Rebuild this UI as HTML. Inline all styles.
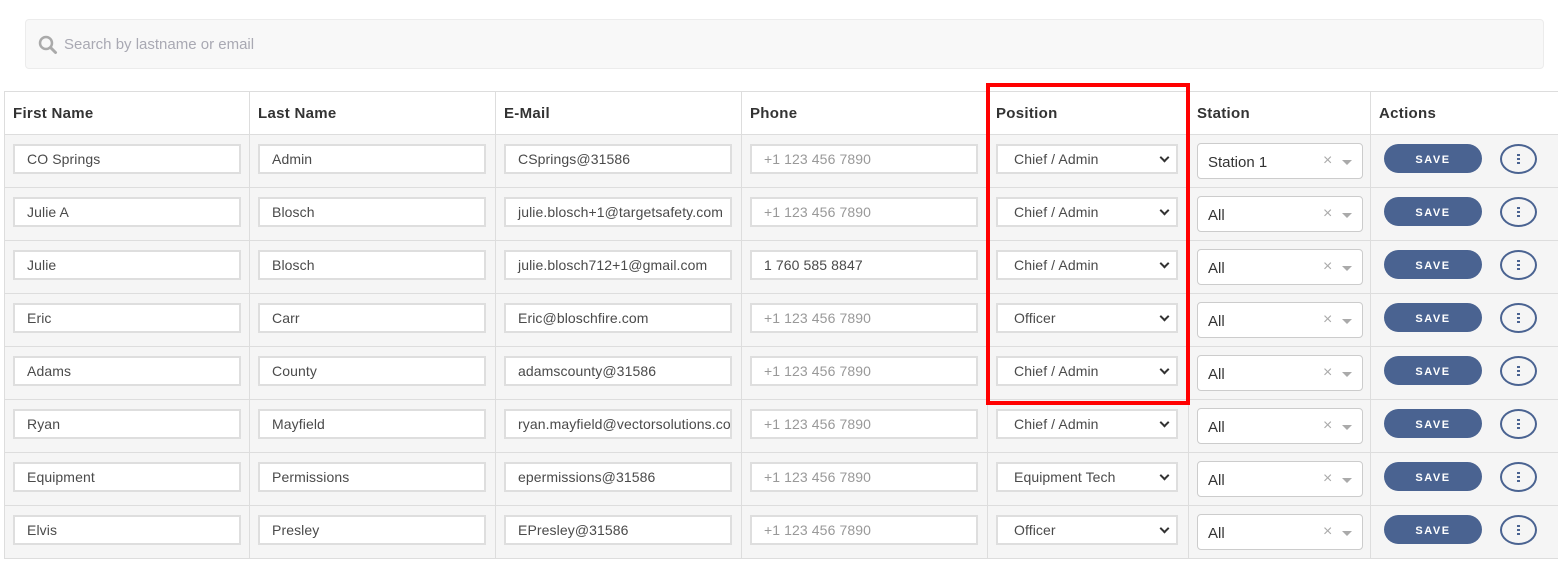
<!DOCTYPE html>
<html><head><meta charset="utf-8"><style>
*{box-sizing:border-box;margin:0;padding:0}
body{width:1558px;height:561px;background:#fff;font-family:"Liberation Sans",Arial,sans-serif;position:relative;overflow:hidden}
.search{position:absolute;left:25px;top:19px;width:1519px;height:50px;background:#f8f8f8;border:1px solid #ececec;border-radius:4px}
.search span{position:absolute;left:38px;top:16px;font-size:15px;color:#a9a9b3}
.search svg{position:absolute;left:12px;top:15px}
table{position:absolute;left:4px;top:91px;border-collapse:collapse;table-layout:fixed;width:1556px}
th{height:43px;text-align:left;font-size:15px;font-weight:bold;color:#333;padding-left:8px;border:1px solid #ddd;background:#fff;letter-spacing:.3px}
td{height:53px;border:1px solid #ddd;background:#f5f5f5;position:relative;padding:9px 0 0 8px;vertical-align:top}
.in{width:228px;height:30px;border:2px solid #dedede;background:#fff;font-size:14px;color:#4a4a4a;padding:5px 0 0 12px;white-space:nowrap;overflow:hidden;letter-spacing:.1px}
.ph{color:#999}
.sel{width:182px;height:30px;border:2px solid #dedede;background:#fff;font-size:14px;color:#4a4a4a;padding:5px 0 0 16px;position:relative;letter-spacing:.1px}
.sel:after{content:"";position:absolute;right:8px;top:8px;width:5px;height:5px;border-right:2px solid #333;border-bottom:2px solid #333;transform:rotate(45deg)}
.st{width:166px;height:36px;border:1px solid #ccc;border-radius:4px;background:#fff;font-size:15px;color:#333;padding:10px 0 0 10px;position:relative;margin-top:-1px}
.st .x{position:absolute;left:125px;top:8px;color:#aaa;font-size:16px}
.st .c{position:absolute;left:144px;top:16px;border-left:5px solid transparent;border-right:5px solid transparent;border-top:5px solid #aaa}
.sv{position:absolute;left:13px;top:9px;width:98px;height:29px;border-radius:15px;background:#4a6391;color:#fff;font-size:11px;font-weight:bold;letter-spacing:1.5px;display:flex;align-items:center;justify-content:center;padding-top:2px}
.kb{position:absolute;left:129px;top:9px;width:37px;height:30px;border:2px solid #4a6391;border-radius:50%}
.kb i{position:absolute;left:15px;width:3px;height:2px;background:#4a6391}
.red{position:absolute;left:986px;top:83px;width:204px;height:322px;border:4px solid #f00}
</style></head><body>
<div class="search"><svg width="20" height="20" viewBox="0 0 20 20"><circle cx="8" cy="8" r="6" fill="none" stroke="#aaa" stroke-width="2.5"/><path d="M12.5 12.5 L17.5 17.5" stroke="#aaa" stroke-width="3" stroke-linecap="round"/></svg><span>Search by lastname or email</span></div>
<table>
<colgroup><col style="width:245px"><col style="width:246px"><col style="width:246px"><col style="width:246px"><col style="width:201px"><col style="width:182px"><col style="width:190px"></colgroup>
<tr><th>First Name</th><th>Last Name</th><th>E-Mail</th><th>Phone</th><th>Position</th><th>Station</th><th>Actions</th></tr>
<tr><td><div class="in">CO Springs</div></td><td><div class="in">Admin</div></td><td><div class="in">CSprings@31586</div></td><td><div class="in ph">+1 123 456 7890</div></td><td><div class="sel">Chief / Admin</div></td><td><div class="st">Station 1<span class="x">×</span><span class="c"></span></div></td><td><div class="sv">SAVE</div><div class="kb"><i style="top:8px"></i><i style="top:12px"></i><i style="top:16px"></i></div></td></tr>
<tr><td><div class="in">Julie A</div></td><td><div class="in">Blosch</div></td><td><div class="in">julie.blosch+1@targetsafety.com</div></td><td><div class="in ph">+1 123 456 7890</div></td><td><div class="sel">Chief / Admin</div></td><td><div class="st">All<span class="x">×</span><span class="c"></span></div></td><td><div class="sv">SAVE</div><div class="kb"><i style="top:8px"></i><i style="top:12px"></i><i style="top:16px"></i></div></td></tr>
<tr><td><div class="in">Julie</div></td><td><div class="in">Blosch</div></td><td><div class="in">julie.blosch712+1@gmail.com</div></td><td><div class="in">1 760 585 8847</div></td><td><div class="sel">Chief / Admin</div></td><td><div class="st">All<span class="x">×</span><span class="c"></span></div></td><td><div class="sv">SAVE</div><div class="kb"><i style="top:8px"></i><i style="top:12px"></i><i style="top:16px"></i></div></td></tr>
<tr><td><div class="in">Eric</div></td><td><div class="in">Carr</div></td><td><div class="in">Eric@bloschfire.com</div></td><td><div class="in ph">+1 123 456 7890</div></td><td><div class="sel">Officer</div></td><td><div class="st">All<span class="x">×</span><span class="c"></span></div></td><td><div class="sv">SAVE</div><div class="kb"><i style="top:8px"></i><i style="top:12px"></i><i style="top:16px"></i></div></td></tr>
<tr><td><div class="in">Adams</div></td><td><div class="in">County</div></td><td><div class="in">adamscounty@31586</div></td><td><div class="in ph">+1 123 456 7890</div></td><td><div class="sel">Chief / Admin</div></td><td><div class="st">All<span class="x">×</span><span class="c"></span></div></td><td><div class="sv">SAVE</div><div class="kb"><i style="top:8px"></i><i style="top:12px"></i><i style="top:16px"></i></div></td></tr>
<tr><td><div class="in">Ryan</div></td><td><div class="in">Mayfield</div></td><td><div class="in">ryan.mayfield@vectorsolutions.com</div></td><td><div class="in ph">+1 123 456 7890</div></td><td><div class="sel">Chief / Admin</div></td><td><div class="st">All<span class="x">×</span><span class="c"></span></div></td><td><div class="sv">SAVE</div><div class="kb"><i style="top:8px"></i><i style="top:12px"></i><i style="top:16px"></i></div></td></tr>
<tr><td><div class="in">Equipment</div></td><td><div class="in">Permissions</div></td><td><div class="in">epermissions@31586</div></td><td><div class="in ph">+1 123 456 7890</div></td><td><div class="sel">Equipment Tech</div></td><td><div class="st">All<span class="x">×</span><span class="c"></span></div></td><td><div class="sv">SAVE</div><div class="kb"><i style="top:8px"></i><i style="top:12px"></i><i style="top:16px"></i></div></td></tr>
<tr><td><div class="in">Elvis</div></td><td><div class="in">Presley</div></td><td><div class="in">EPresley@31586</div></td><td><div class="in ph">+1 123 456 7890</div></td><td><div class="sel">Officer</div></td><td><div class="st">All<span class="x">×</span><span class="c"></span></div></td><td><div class="sv">SAVE</div><div class="kb"><i style="top:8px"></i><i style="top:12px"></i><i style="top:16px"></i></div></td></tr>
</table>
<div class="red"></div>
</body></html>
